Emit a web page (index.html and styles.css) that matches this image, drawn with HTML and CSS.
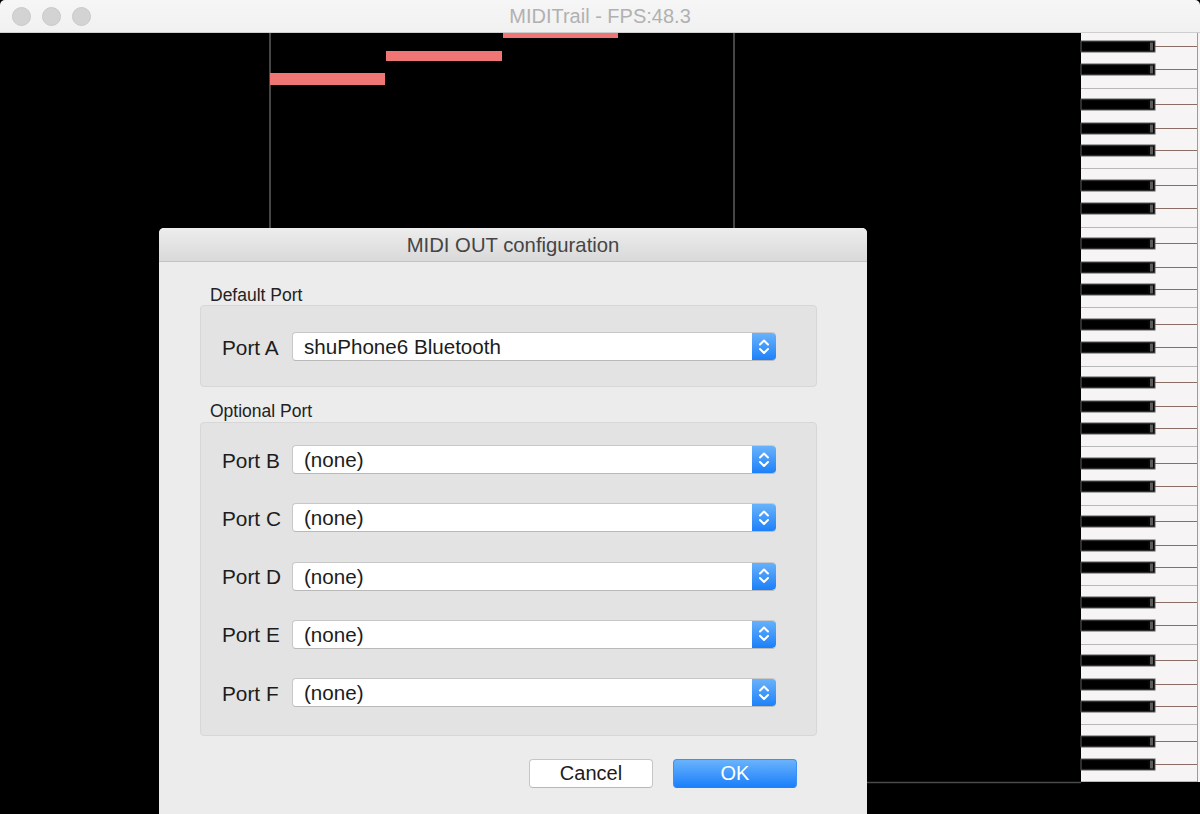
FILE: index.html
```html
<!DOCTYPE html>
<html lang="en">
<head>
  <meta charset="UTF-8">
  <title>MIDITrail - FPS:48.3</title>
  <link rel="stylesheet" href="styles.css">
</head>
<body>
  <div class="window">
    <div class="titlebar">
      <div class="lights">
        <span class="light"></span>
        <span class="light"></span>
        <span class="light"></span>
      </div>
      <div class="title">MIDITrail - FPS:48.3</div>
      <div></div>
    </div>

    <div class="viewport">
      <!-- 3D view: note bars, guide lines and the keyboard -->
      <svg class="scene" width="1200" height="781" viewBox="0 33 1200 781">
        <defs>
          <g id="bk">
            <line x1="1155" y1="5.5" x2="1197" y2="5.5" stroke="#8a6d64" stroke-width="1"/>
            <rect x="1081" y="0" width="74" height="11" fill="#070707" stroke="#5a5a5a" stroke-width="1"/>
            <rect x="1082" y="2" width="66" height="7" fill="#000"/>
            <rect x="1150" y="1.5" width="3" height="8" fill="#5c5c5c"/>
          </g>
        </defs>

        <line x1="270" y1="33" x2="270" y2="782" stroke="#5c5c5c" stroke-width="1.5"/>
        <line x1="734" y1="33" x2="734" y2="782" stroke="#5c5c5c" stroke-width="1.5"/>
        <line x1="270" y1="782.5" x2="1081" y2="782.5" stroke="#4a4a4a" stroke-width="1.5"/>

        <rect x="270" y="73" width="115" height="12" fill="#f07575"/>
        <rect x="386" y="51" width="116" height="10" fill="#f07575"/>
        <rect x="503" y="33" width="115" height="5" fill="#f07575"/>

        <rect x="1081" y="33" width="119" height="749" fill="#f6f4f4"/>
        <line x1="1197.5" y1="33" x2="1197.5" y2="782" stroke="#9a9aa4" stroke-width="1"/>

        <g stroke="#b8b8b8" stroke-width="1">
          <line x1="1081" y1="88.5" x2="1197" y2="88.5"/>
          <line x1="1081" y1="168.5" x2="1197" y2="168.5"/>
          <line x1="1081" y1="227.5" x2="1197" y2="227.5"/>
          <line x1="1081" y1="307.5" x2="1197" y2="307.5"/>
          <line x1="1081" y1="366.5" x2="1197" y2="366.5"/>
          <line x1="1081" y1="446.5" x2="1197" y2="446.5"/>
          <line x1="1081" y1="505.5" x2="1197" y2="505.5"/>
          <line x1="1081" y1="585.5" x2="1197" y2="585.5"/>
          <line x1="1081" y1="644.5" x2="1197" y2="644.5"/>
          <line x1="1081" y1="724.5" x2="1197" y2="724.5"/>
          <line x1="1081" y1="781.5" x2="1197" y2="781.5"/>
        </g>

        <use href="#bk" y="41"/>
        <use href="#bk" y="64"/>
        <use href="#bk" y="99"/>
        <use href="#bk" y="123"/>
        <use href="#bk" y="145"/>
        <use href="#bk" y="180"/>
        <use href="#bk" y="203"/>
        <use href="#bk" y="238"/>
        <use href="#bk" y="262"/>
        <use href="#bk" y="284"/>
        <use href="#bk" y="319"/>
        <use href="#bk" y="342"/>
        <use href="#bk" y="377"/>
        <use href="#bk" y="401"/>
        <use href="#bk" y="423"/>
        <use href="#bk" y="458"/>
        <use href="#bk" y="481"/>
        <use href="#bk" y="516"/>
        <use href="#bk" y="540"/>
        <use href="#bk" y="562"/>
        <use href="#bk" y="597"/>
        <use href="#bk" y="620"/>
        <use href="#bk" y="655"/>
        <use href="#bk" y="679"/>
        <use href="#bk" y="701"/>
        <use href="#bk" y="736"/>
        <use href="#bk" y="759"/>
      </svg>

      <div class="sheet">
        <div class="sheet-title">MIDI OUT configuration</div>
        <div class="sheet-body">
          <div class="group-label">Default Port</div>
          <div class="group group-default">
            <div class="port-row">
              <span class="port-name">Port A</span>
              <div class="popup">
                <span class="popup-value">shuPhone6 Bluetooth</span>
                <span class="popup-arrows">
                  <svg width="24" height="29" viewBox="0 0 24 29"><polyline points="8,12.5 12,8.5 16,12.5" fill="none" stroke="#fff" stroke-width="2" stroke-linecap="round" stroke-linejoin="round"/><polyline points="8,17 12,21 16,17" fill="none" stroke="#fff" stroke-width="2" stroke-linecap="round" stroke-linejoin="round"/></svg>
                </span>
              </div>
            </div>
          </div>

          <div class="group-label group-label-second">Optional Port</div>
          <div class="group group-optional">
            <div class="port-row">
              <span class="port-name">Port B</span>
              <div class="popup">
                <span class="popup-value">(none)</span>
                <span class="popup-arrows">
                  <svg width="24" height="29" viewBox="0 0 24 29"><polyline points="8,12.5 12,8.5 16,12.5" fill="none" stroke="#fff" stroke-width="2" stroke-linecap="round" stroke-linejoin="round"/><polyline points="8,17 12,21 16,17" fill="none" stroke="#fff" stroke-width="2" stroke-linecap="round" stroke-linejoin="round"/></svg>
                </span>
              </div>
            </div>
            <div class="port-row">
              <span class="port-name">Port C</span>
              <div class="popup">
                <span class="popup-value">(none)</span>
                <span class="popup-arrows">
                  <svg width="24" height="29" viewBox="0 0 24 29"><polyline points="8,12.5 12,8.5 16,12.5" fill="none" stroke="#fff" stroke-width="2" stroke-linecap="round" stroke-linejoin="round"/><polyline points="8,17 12,21 16,17" fill="none" stroke="#fff" stroke-width="2" stroke-linecap="round" stroke-linejoin="round"/></svg>
                </span>
              </div>
            </div>
            <div class="port-row">
              <span class="port-name">Port D</span>
              <div class="popup">
                <span class="popup-value">(none)</span>
                <span class="popup-arrows">
                  <svg width="24" height="29" viewBox="0 0 24 29"><polyline points="8,12.5 12,8.5 16,12.5" fill="none" stroke="#fff" stroke-width="2" stroke-linecap="round" stroke-linejoin="round"/><polyline points="8,17 12,21 16,17" fill="none" stroke="#fff" stroke-width="2" stroke-linecap="round" stroke-linejoin="round"/></svg>
                </span>
              </div>
            </div>
            <div class="port-row">
              <span class="port-name">Port E</span>
              <div class="popup">
                <span class="popup-value">(none)</span>
                <span class="popup-arrows">
                  <svg width="24" height="29" viewBox="0 0 24 29"><polyline points="8,12.5 12,8.5 16,12.5" fill="none" stroke="#fff" stroke-width="2" stroke-linecap="round" stroke-linejoin="round"/><polyline points="8,17 12,21 16,17" fill="none" stroke="#fff" stroke-width="2" stroke-linecap="round" stroke-linejoin="round"/></svg>
                </span>
              </div>
            </div>
            <div class="port-row">
              <span class="port-name">Port F</span>
              <div class="popup">
                <span class="popup-value">(none)</span>
                <span class="popup-arrows">
                  <svg width="24" height="29" viewBox="0 0 24 29"><polyline points="8,12.5 12,8.5 16,12.5" fill="none" stroke="#fff" stroke-width="2" stroke-linecap="round" stroke-linejoin="round"/><polyline points="8,17 12,21 16,17" fill="none" stroke="#fff" stroke-width="2" stroke-linecap="round" stroke-linejoin="round"/></svg>
                </span>
              </div>
            </div>
          </div>

          <div class="buttons">
            <button class="btn">Cancel</button>
            <button class="btn btn-default">OK</button>
          </div>
        </div>
      </div>
    </div>
  </div>
</body>
</html>
```

FILE: styles.css
```css
* {
  margin: 0;
  padding: 0;
  box-sizing: border-box;
}

html,
body {
  background: #000;
}

body {
  font-family: "Liberation Sans", Arial, sans-serif;
  width: 1200px;
  height: 814px;
  overflow: hidden;
}

.window {
  width: 1200px;
  height: 814px;
}

.titlebar {
  height: 33px;
  display: grid;
  grid-template-columns: 1fr auto 1fr;
  align-items: center;
  background: linear-gradient(#f6f6f6, #f1f1f1);
  border-bottom: 1px solid #cfcfcf;
  border-radius: 5px 5px 0 0;
}

.lights {
  display: flex;
  gap: 11px;
  padding-left: 12px;
  padding-top: 1px;
}

.light {
  width: 19px;
  height: 19px;
  border-radius: 50%;
  background: #d3d3d3;
  border: 1px solid #c9c9c9;
}

.title {
  font-size: 20px;
  color: #b1b1b1;
  line-height: 32px;
}

.viewport {
  position: relative;
  height: 781px;
  background: #000;
}

.scene {
  display: block;
}

/* sheet dropped over the 3D view */
.sheet {
  position: absolute;
  left: 159px;
  top: 195px;
  width: 708px;
  height: 586px;
  background: #ececec;
  border-radius: 5px 5px 0 0;
}

.sheet-title {
  height: 34px;
  line-height: 34px;
  text-align: center;
  font-size: 20.3px;
  color: #454545;
  background: linear-gradient(#ededed, #d9d9d9);
  border-bottom: 1px solid #c3c3c3;
  border-radius: 5px 5px 0 0;
}

.sheet-body {
  padding: 23px 50px 0 41px;
}

.group-label {
  font-size: 17.5px;
  line-height: 20px;
  color: #222;
  padding-left: 10px;
}

.group-label-second {
  margin-top: 14px;
  margin-bottom: 1px;
}

.group {
  background: #e3e3e3;
  border: 1px solid #d7d7d7;
  border-radius: 4px;
  padding-left: 21px;
  display: flex;
  flex-direction: column;
  gap: 29.25px;
}

.group-default {
  height: 82px;
  padding-top: 26px;
}

.group-optional {
  height: 314px;
  padding-top: 22px;
}

.port-row {
  display: flex;
  align-items: center;
  height: 29px;
}

.port-name {
  width: 70px;
  font-size: 20.8px;
  color: #1c1c1c;
  padding-top: 2px;
}

.popup {
  width: 484px;
  height: 29px;
  display: flex;
  align-items: center;
  background: #fff;
  border: 1px solid #c8c8c8;
  border-bottom-color: #b9b9b9;
  border-right: none;
  border-radius: 4px;
  overflow: hidden;
}

.popup-value {
  flex: 1;
  padding-left: 11px;
  padding-top: 1px;
  font-size: 20.6px;
  color: #1c1c1c;
}

.popup-arrows {
  width: 24px;
  height: 29px;
  margin-top: -1px;
  background: linear-gradient(#6cb4fb, #1b7ff9);
  border-radius: 0 4px 4px 0;
}

.popup-arrows svg {
  display: block;
}

.buttons {
  display: flex;
  justify-content: flex-end;
  gap: 20px;
  margin-top: 23px;
  padding-right: 20px;
}

.btn {
  width: 124px;
  height: 29px;
  font-family: inherit;
  font-size: 20px;
  color: #1c1c1c;
  background: #fff;
  border: 1px solid #c6c6c6;
  border-bottom-color: #b8b8b8;
  border-radius: 4px;
}

.btn-default {
  color: #fff;
  background: linear-gradient(#6ab3fb, #1a80fb);
  border-color: #3d91f5;
  border-bottom-color: #2c7ee8;
}
```
